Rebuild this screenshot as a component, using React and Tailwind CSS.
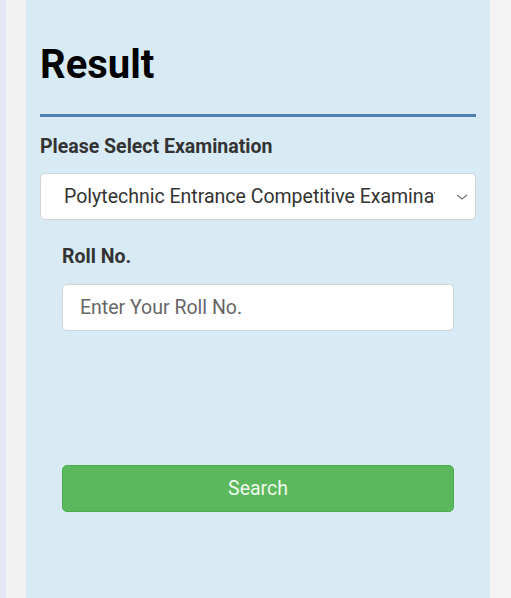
import React from "react";

const ResultForm = () => {
  return (
    <div className="flex h-[598px] w-full bg-[#f3f3f4] font-['Roboto',sans-serif]">
      <div className="w-[6px] bg-[#e6e7f5]" />
      <div className="w-[20px] bg-[#f2f2f3]" />
      <main className="flex w-[464px] flex-col bg-[#d8ebf5] px-[14px]">
        <h1 className="mt-[40px] text-[40px] font-bold leading-[50px] text-black">Result</h1>
        <hr className="mt-[24px] h-[3px] border-0 bg-[#4f80b0]" />
        <label className="mt-[18px] text-[19.5px] font-bold leading-[24px] text-[#333]">
          Please Select Examination
        </label>
        <div className="relative mt-[14px]">
          <select className="h-[47px] w-full appearance-none rounded-[5px] border border-[#cfd4d8] bg-white pl-[23px] pr-[40px] text-[19.5px] text-[#333] outline-none">
            <option>Polytechnic Entrance Competitive Examination</option>
          </select>
          <svg
            className="pointer-events-none absolute right-[8px] top-[19px] h-[10px] w-[12px] text-[#777]"
            viewBox="0 0 12 10"
            fill="none"
            stroke="currentColor"
            strokeWidth="1.2"
          >
            <path d="M1 3l5 4 5-4" />
          </svg>
        </div>
        <div className="flex flex-col px-[22px]">
          <label className="mt-[25px] text-[19.5px] font-bold leading-[24px] text-[#333]">Roll No.</label>
          <input
            className="mt-[15px] h-[47px] w-full rounded-[5px] border border-[#cfd4d8] bg-white px-[17px] text-[19.5px] text-[#333] outline-none placeholder:text-[#666]"
            placeholder="Enter Your Roll No."
          />
          <button className="mt-[134px] h-[47px] w-full rounded-[5px] border border-[#4cae4c] bg-[#5cb85c] text-[19.5px] text-[#eef8ee]">
            Search
          </button>
        </div>
      </main>
      <div className="flex-1 bg-[#f3f3f3]" />
    </div>
  );
};

export default function App() {
  return <ResultForm />;
}
